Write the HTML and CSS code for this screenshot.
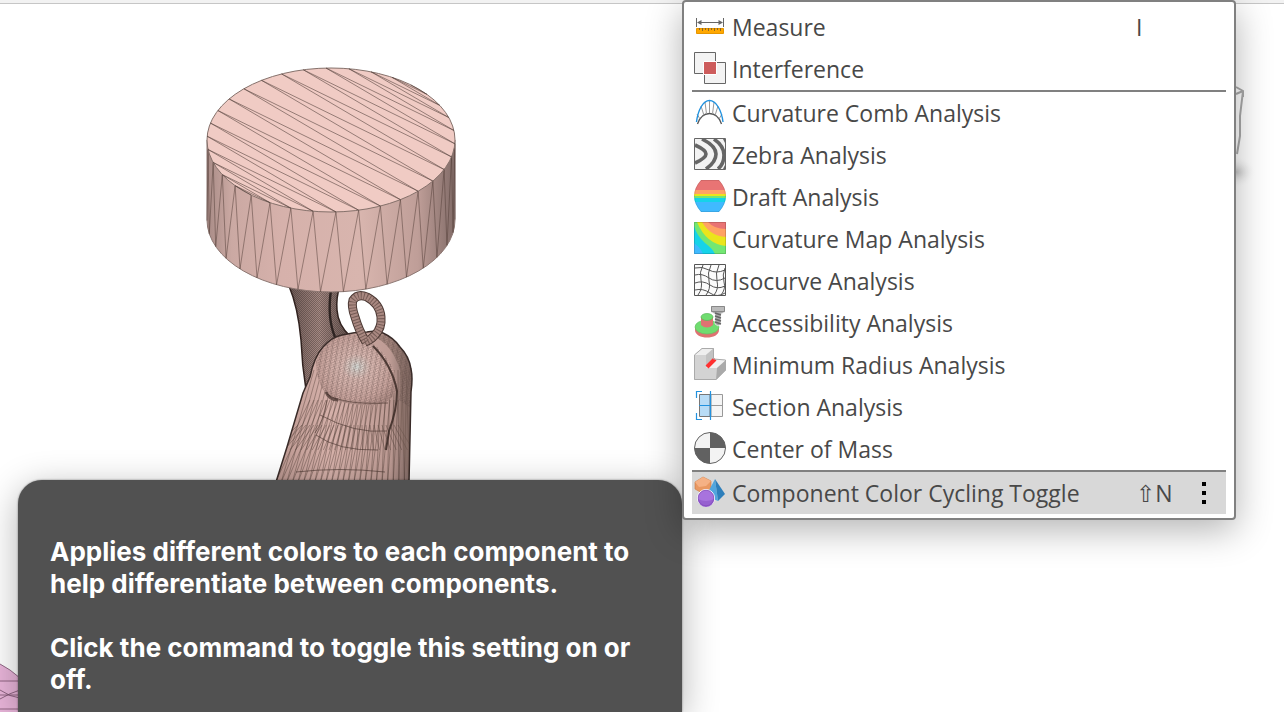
FILE: index.html
```
<!DOCTYPE html>
<html lang="en">
<head>
  <meta charset="UTF-8">
  <meta name="viewport" content="width=device-width, initial-scale=1.0">
  <title>Inspect</title>
  <link rel="stylesheet" href="styles.css">
</head>
<body>
  <!-- Model view behind the menu -->
  <svg class="viewport" viewBox="0 0 1284 712" preserveAspectRatio="xMinYMin slice" aria-hidden="true">
    <defs>
      <linearGradient id="side" x1="0" x2="1">
        <stop offset="0" stop-color="#a88b86"/>
        <stop offset=".1" stop-color="#cba9a3"/>
        <stop offset=".3" stop-color="#d6b1ab"/>
        <stop offset=".62" stop-color="#d8b5ae"/>
        <stop offset=".85" stop-color="#bf9e98"/>
        <stop offset="1" stop-color="#826c68"/>
      </linearGradient>
      <linearGradient id="bodyFill" x1="0" x2="1">
        <stop offset="0" stop-color="#b8958e"/>
        <stop offset=".4" stop-color="#d6b1aa"/>
        <stop offset=".8" stop-color="#bd9b94"/>
        <stop offset="1" stop-color="#665450"/>
      </linearGradient>
      <linearGradient id="stemFill" x1="0" x2="1">
        <stop offset="0" stop-color="#6b5854"/>
        <stop offset=".5" stop-color="#a68a84"/>
        <stop offset="1" stop-color="#61504c"/>
      </linearGradient>
      <radialGradient id="headFill" cx=".5" cy=".46" r=".6">
        <stop offset="0" stop-color="#e2eae7"/>
        <stop offset=".14" stop-color="#dfd0ca"/>
        <stop offset=".3" stop-color="#e2c0b9"/>
        <stop offset=".75" stop-color="#d1aba4"/>
        <stop offset="1" stop-color="#b08e87"/>
      </radialGradient>
      <radialGradient id="spot">
        <stop offset="0" stop-color="#c4c4c4"/>
        <stop offset="1" stop-color="#fff" stop-opacity="0"/>
      </radialGradient>
      <pattern id="fineMesh" width="5" height="5" patternUnits="userSpaceOnUse" patternTransform="rotate(8)">
        <path d="M0 2.5L5 0M0 5L5 2.5M1.5 0L3.5 5" stroke="#5a4641" stroke-opacity=".7" stroke-width=".6" fill="none"/>
      </pattern>
      <pattern id="stemMesh" width="4" height="4" patternUnits="userSpaceOnUse">
        <path d="M0 4L4 0M0 2L2 0M2 4L4 2" stroke="#392d2a" stroke-opacity=".8" stroke-width=".5" fill="none"/>
      </pattern>
      <clipPath id="bodyClip">
        <path d="M276 482L287 447L303 393Q307 384 310 377Q314 357 323 347Q332 337 342 335Q354 332 367 332Q376 330 383 333Q394 338 400 347Q409 356 411 369Q413 378 411 392L409 482Z"/>
      </clipPath>
    </defs>

    <path d="M1236 87L1243 91L1240 116V136L1237 154M1236 94L1243 91M1243 91V97" fill="none" stroke="#aaa" stroke-width="2"/>
    <ellipse cx="1236" cy="172" rx="20" ry="16" fill="url(#spot)"/>

    <path d="M289 286Q298 307 301 340Q302 365 306 390L326 396L350 336Q338 325 337 310Q336 297 340 286Z" fill="url(#stemFill)"/>
    <path d="M289 286Q298 307 301 340Q302 365 306 390L326 396L350 336Q338 325 337 310Q336 297 340 286Z" fill="url(#stemMesh)" stroke="#30211e" stroke-width="1.5"/>
    <path d="M331 290Q327 318 335 337" fill="none" stroke="#2d2321" stroke-width="2.4"/>

    <g clip-path="url(#bodyClip)">
      <rect x="270" y="325" width="150" height="160" fill="url(#bodyFill)"/>
      <g id="ribs" fill="none" stroke="#4f3b34" stroke-opacity=".6" stroke-width=".7"></g>
      <path d="M373 336Q392 344 400 370L399 430L409 480H414V330Z" fill="#81685f" opacity=".4"/>
      <path d="M373 336Q392 344 400 370L399 400L414 410V330Z" fill="url(#fineMesh)"/>
      <path d="M330 398Q316 385 316 362Q323 342 342 335Q357 331 375 345Q396 362 397 388Q392 406 366 405Q343 404 330 398Z" fill="url(#headFill)"/>
      <path d="M330 398Q316 385 316 362Q323 342 342 335Q357 331 375 345Q396 362 397 388Q392 406 366 405Q343 404 330 398Z" fill="url(#fineMesh)"/>
      <path d="M327 394Q342 405 388 403M320 415Q355 434 387 431M316 435Q338 451 378 450M296 472Q340 467 385 472M327 400Q323 422 315 433" fill="none" stroke="#4d3933" stroke-opacity=".8" stroke-width=".8"/>
      <path d="M326 392Q329 400 338 400" fill="none" stroke="#33231e" stroke-width="3" opacity=".6"/>
      <path d="M373 346Q392 365 397 391Q397 410 389 431L386 450" fill="none" stroke="#3a2925" stroke-opacity=".85" stroke-width="2"/>
    </g>
    <path d="M276 482L287 447L303 393Q307 384 310 377Q314 357 323 347Q332 337 342 335Q354 332 367 332Q376 330 383 333Q394 338 400 347Q409 356 411 369Q413 378 411 392L409 482" fill="none" stroke="#392b28" stroke-width="1.5"/>
    <path d="M366 342Q359 331 355 317Q351 306 353 300Q358 293 367 297Q380 304 381 317Q382 328 375 335Q371 340 365 342" fill="none" stroke="#4b3833" stroke-width="9"/>
    <path d="M366 342Q359 331 355 317Q351 306 353 300Q358 293 367 297Q380 304 381 317Q382 328 375 335Q371 340 365 342" fill="none" stroke="#a98881" stroke-width="7"/>
    <path d="M366 342Q359 331 355 317Q351 306 353 300Q358 293 367 297Q380 304 381 317Q382 328 375 335Q371 340 365 342" fill="none" stroke="#54403b" stroke-opacity=".6" stroke-width="7" stroke-dasharray="1 2"/>

    <path d="M207 140V220A124 72 0 0 0 455 220V140Z" fill="url(#side)" stroke="#8d7772"/>
    <path id="sideMesh" fill="none" stroke="#4f3b36" stroke-opacity=".55" stroke-width=".9"/>
    <ellipse cx="331" cy="140" rx="124" ry="72" fill="#f0cbc4" stroke="#85716b"/>
    <path id="topMesh" fill="none" stroke="#56423d" stroke-opacity=".65" stroke-width=".9"/>

    <path d="M0 664Q10 669 20 678V712H0Z" fill="#e9b5da"/>
    <path d="M0 664Q10 669 20 678M0 681H20M0 690Q10 697 20 698M0 699Q10 693 20 690M0 695H20M0 709H20" fill="none" stroke="#78506d" stroke-width=".8"/>
  </svg>

  <header class="toolbar-edge"></header>

  <main class="overlay">
    <aside class="tooltip" role="tooltip" id="toggle-help">
      <p>Applies different colors to each component to help differentiate between components.</p>
      <p>Click the command to toggle this setting on or off.</p>
    </aside>

    <ul class="menu">
      <li class="item"><button class="command">
        <svg class="icon" viewBox="0 0 32 32"><path d="M2.5 8V17M29.5 8V17M4 12.5H28" stroke="#666" fill="none"/><path d="M3 12.5L7.500 10V15ZM29 12.500L24.500 10V15Z" fill="#666"/><path d="M2.500 18.500H29.500V23.500H2.500Z" fill="#ffa800" stroke="#e69500"/><path d="M5.500 18V20M8.500 18V21M11.500 18V20M14.500 18V21M17.500 18V20M20.500 18V21M23.500 18V20M26.500 18V21" stroke="#8b6727"/></svg>
        <span class="label">Measure</span><kbd>I</kbd></button></li>
      <li class="item"><button class="command">
        <svg class="icon" viewBox="0 0 32 32"><path d="M.5.5H21.500V21.500H.5ZM10.500 10.500H31.500V31.500H10.500Z" fill="#f3f3f3" stroke="#666"/><path d="M9.500 9.500H22.500V22.500H9.500Z" fill="#cd5c5c" stroke="#fff"/></svg>
        <span class="label">Interference</span></button></li>
      <li class="item divided"><button class="command">
        <svg class="icon" viewBox="0 0 32 32"><path d="M3.500 28Q7 17.500 15.500 17.500T27.500 28" fill="none" stroke="#555" stroke-width="1.300"/><path d="M6 23L3 18M10 19.500L7 10M15.500 17V4M21 19.500L24 10M25 23L28 18M12.500 18L11 6M18.500 18L20 6" stroke="#999" fill="none"/><path d="M2.500 26C4 14 9 4.500 15.500 4.500S27.500 14 29 26" fill="none" stroke="#2292df" stroke-width="1.400"/></svg>
        <span class="label">Curvature Comb Analysis</span></button></li>
      <li class="item"><button class="command">
        <svg class="icon" viewBox="0 0 32 32"><path d="M.5.5H31.500V31.500H.5Z" fill="#f3f3f3"/><path d="M1 7Q12 12 12 16T1 25M8 1Q22 8 22 16T12 31M20 1Q30 8 30 17T24 31" fill="none" stroke="#666" stroke-width="3.600"/><path d="M29 1H31V5ZM29 31L31 27V31Z" fill="#666"/><path d="M.5.5H31.500V31.500H.5Z" fill="none" stroke="#666"/></svg>
        <span class="label">Zebra Analysis</span></button></li>
      <li class="item"><button class="command">
        <svg class="icon" viewBox="0 0 32 32"><clipPath id="barrel"><path d="M7 0H25Q32 8 32 16T25 32H7Q0 24 0 16T7 0Z"/></clipPath><g clip-path="url(#barrel)"><path d="M0 0H32V10H0Z" fill="#e97474"/><path d="M0 10H32V14H0Z" fill="#ffa264"/><path d="M0 14H32V16H0Z" fill="#ebe51c"/><path d="M0 16H32V18H0Z" fill="#73e773"/><path d="M0 18H32V22H0Z" fill="#16d3e9"/><path d="M0 22H32V32H0Z" fill="#40baff"/></g><path d="M7 .5H25Q31.500 8 31.500 16T25 31.500H7Q.5 24 .5 16T7 .5Z" fill="none" stroke="#000" stroke-opacity=".1"/></svg>
        <span class="label">Draft Analysis</span></button></li>
      <li class="item"><button class="command">
        <svg class="icon" viewBox="0 0 32 32"><path d="M0 0H32V32H0Z" fill="#40baff"/><path d="M0 0H32V32H9Q7 26 0 21Z" fill="#16d3e9"/><path d="M0 0H32V32H21Q19 27 11 21Q3 14 0 4Z" fill="#73e773"/><path d="M3 0H32V24Q12 22 3 0Z" fill="#ebe51c"/><path d="M8 0H32V15Q16 14 8 0Z" fill="#ffa264"/><path d="M14 0H32V7Q20 7 14 0Z" fill="#e97474"/><path d="M.5.5H31.500V31.500H.5Z" fill="none" stroke="#000" stroke-opacity=".15"/></svg>
        <span class="label">Curvature Map Analysis</span></button></li>
      <li class="item"><button class="command">
        <svg class="icon" viewBox="0 0 32 32"><path d="M.5.5H31.500V31.500H.5Z" fill="#fbfbfb" stroke="#555"/><path d="M1 4Q8 2 15 6T31 6M1 11Q8 9 15 14T31 14M1 19Q9 16 16 21T31 22M1 26Q9 24 16 29T31 29M9 1Q5 8 7 16T4 31M17 1Q13 9 15 17T12 31M25 1Q21 9 23 17T20 31M31 4Q28 11 30 18T27 31" fill="none" stroke="#555"/></svg>
        <span class="label">Isocurve Analysis</span></button></li>
      <li class="item"><button class="command">
        <svg class="icon" viewBox="0 0 32 32"><path d="M1 21V24C1 34 25 34 25 24V21Z" fill="#df7272"/><ellipse cx="13" cy="21" rx="12" ry="7" fill="#70dc70" stroke="#63bf63" stroke-width=".6"/><path d="M7 11V19Q13 24 19 19V11Z" fill="#df7272"/><ellipse cx="13" cy="11" rx="6" ry="3.500" fill="#70dc70" stroke="#58b758" stroke-width=".7"/><path d="M17 0H31V6L27 8V18L24 20L21 18V8L17 6Z" fill="#aaa" stroke="#fff" stroke-width=".6"/><path d="M17.500.5H30.500V5.500H17.500Z" fill="#bbb" stroke="#888"/><path d="M21 7L27 9M21 10L27 12M21 13L27 15M21 16L27 18" stroke="#666" stroke-width="1.400"/></svg>
        <span class="label">Accessibility Analysis</span></button></li>
      <li class="item"><button class="command">
        <svg class="icon" viewBox="0 0 32 32"><path d="M0 7L8 0H20V11L32 12V22L22 32H0Z" fill="#d3d3d3"/><path d="M0 7L8 0H20L12 7Z" fill="#eee"/><path d="M12 7L20 0V11L12 20Z" fill="#c2c2c2"/><path d="M12 20L20 11L32 12L23 20Z" fill="#f1f1f1"/><path d="M23 20L32 12V22L22 32Z" fill="#aaa"/><path d="M13 19L21 11" stroke="#ff3030" stroke-width="4"/><path d="M.5 7L8 .5H19.500V11L31.500 12V22L22 31.500H.5Z" fill="none" stroke="#aaa"/></svg>
        <span class="label">Minimum Radius Analysis</span></button></li>
      <li class="item"><button class="command">
        <svg class="icon" viewBox="0 0 32 32"><path d="M5.500 4.500H16V26.500H5.500Z" fill="#b8dcf6" stroke="#777"/><path d="M17 4.500H28.500V26.500H17Z" fill="#f5f5f5" stroke="#999"/><path d="M16 15.500H28" stroke="#999"/><path d="M5 15.500H16M8 1.500H2.500V8M2.500 23V29.500H8M16.500 1V30" fill="none" stroke="#2292df" stroke-width="1.200"/></svg>
        <span class="label">Section Analysis</span></button></li>
      <li class="item"><button class="command">
        <svg class="icon" viewBox="0 0 32 32"><circle cx="16" cy="16" r="15.500" fill="#f3f3f3"/><path d="M16 .5A15.500 15.500 0 0 1 31.500 16H16ZM16 31.500A15.500 15.500 0 0 1 .5 16H16Z" fill="#616161"/><circle cx="16" cy="16" r="15.500" fill="none" stroke="#616161"/></svg>
        <span class="label">Center of Mass</span></button></li>
      <li class="item divided active"><button class="command" aria-describedby="toggle-help">
        <svg class="icon" viewBox="0 0 32 32"><path d="M1 6L9 1L17 5V13L8 17L1 13Z" fill="#e99862" stroke="#c97a45" stroke-width=".6"/><path d="M1 6L9 1L17 5L12 10L5 11Z" fill="#f5b185"/><path d="M21 3L12 20L24 25Z" fill="#51a6de"/><path d="M21 3L31 18L24 25Z" fill="#2e7fbb"/><circle cx="12" cy="22" r="8.500" fill="#a873de" stroke="#fff"/><path d="M4 23Q12 27 20 23A8 8 0 0 1 4 23Z" fill="#9660d0"/><circle cx="12" cy="22" r="7.800" fill="none" stroke="#8149b8" stroke-width=".7"/></svg>
        <span class="label">Component Color Cycling Toggle</span><kbd><span class="shift">⇧</span>N</kbd></button>
        <button class="more" aria-label="More options"><svg viewBox="0 0 6 24"><path d="M1 1H5V5H1ZM1 10H5V14H1ZM1 19H5V23H1Z"/></svg></button></li>
    </ul>
  </main>

<script>
const segments = 34;
const step = 2 * Math.PI / segments;

// Point on the rim of the cylinder
function rim(k, cy, offset) {
  const angle = offset + k * step;
  return `${331 + 124 * Math.sin(angle)} ${cy + 72 * Math.cos(angle)}`;
}

// Triangle strip across the top face
let topPath = "";
for (let i = -4; i <= 12; i++) {
  topPath += `M${rim(i, 140, 0.04)}L${rim(-8 - i, 140, 0.04)}M${rim(i, 140, 0.04)}L${rim(-9 - i, 140, 0.04)}`;
}
document.getElementById("topMesh").setAttribute("d", topPath);

// Zigzag round the visible half of the side
let sidePath = "";
for (let k = -8; k <= 8; k++) {
  sidePath += `M${rim(k - 1, 220, 0.1)}L${rim(k, 140, 0.04)}L${rim(k, 220, 0.1)}`;
}
document.getElementById("sideMesh").setAttribute("d", sidePath);

// Long triangles down the body
let ribs = "";
for (let i = 0; i < 26; i++) {
  const top = 306 + i * 4;
  const bottom = 270 + i * 5.6;
  ribs += `<path d="M${top} 370L${bottom} 482L${top + 4} 400M${top - 8} 425L${bottom + 3} 450"/>`;
}
document.getElementById("ribs").innerHTML = ribs;
</script>
</body>
</html>
```
FILE: styles.css
```
* {
  box-sizing: border-box;
}

body {
  margin: 0;
  min-height: 100vh;
  background: #fff;
  overflow: hidden;
}

/* Model sits behind everything */
.viewport {
  position: absolute;
  top: 0;
  left: 0;
  width: 100%;
  height: 100%;
}

.toolbar-edge {
  position: absolute;
  top: 0;
  left: 0;
  width: 100%;
  height: 4px;
  background: #f2f2f2;
  border-bottom: 1px solid #c6c6c6;
}

.overlay {
  position: relative;
  display: flex;
  align-items: flex-start;
  min-height: 100vh;
  padding: 0 48px 0 18px;
}

.tooltip {
  flex: 1;
  align-self: flex-end;
  padding: 56px 32px 16px;
  border-radius: 24px 24px 0 0;
  background: #515151;
  box-shadow: 0 0 2px rgba(0, 0, 0, 0.5), 0 8px 36px rgba(0, 0, 0, 0.3);
  color: #fff;
  font-family: Inter, sans-serif;
  font-size: 26px;
  font-weight: 700;
  line-height: 32px;
}

.tooltip p {
  margin: 0;
}

.tooltip p + p {
  margin-top: 32px;
}

/* Menu */
.menu {
  flex: 0 0 554px;
  margin: 0;
  padding: 4px 8px;
  list-style: none;
  background: #fff;
  border: 2px solid #808080;
  border-radius: 4px;
  box-shadow: 0 10px 36px rgba(0, 0, 0, 0.3);
}

.item {
  display: flex;
  padding-right: 44px;
}

.item.divided {
  border-top: 2px solid #808080;
}

.item.active {
  padding-right: 0;
  background: #d8d8d8;
}

.command {
  display: flex;
  flex: 1;
  align-items: center;
  gap: 6px;
  height: 42px;
  padding: 0 0 2px 2px;
  border: none;
  background: none;
  color: #484848;
  font-family: "Open Sans", sans-serif;
  font-size: 23px;
  font-weight: 500;
  text-align: left;
}

.icon {
  width: 32px;
  height: 32px;
}

.label,
kbd {
  padding-top: 2px;
}

.label {
  flex: 1;
  white-space: nowrap;
}

kbd {
  width: 46px;
  font-family: "Open Sans", sans-serif;
}

.shift {
  font-family: "DejaVu Sans", sans-serif;
}

.more {
  width: 44px;
  padding: 0;
  border: none;
  background: none;
}

.more svg {
  display: block;
  width: 6px;
  height: 24px;
  margin: 0 auto;
}
```
